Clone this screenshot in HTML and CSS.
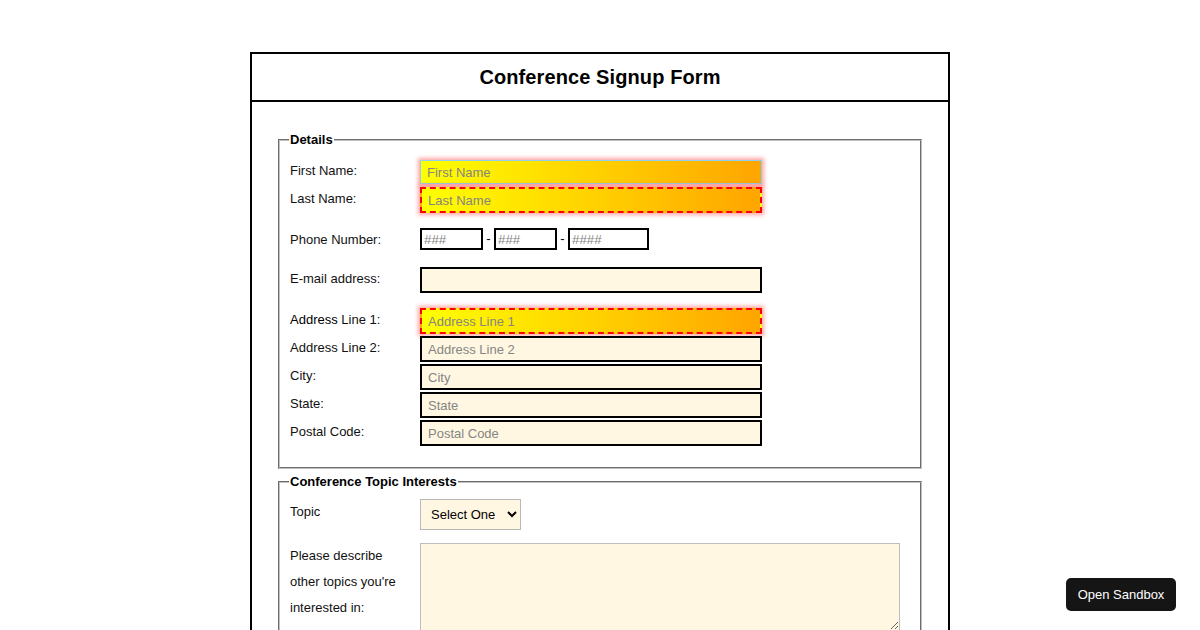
FILE: index.html
```html
<!DOCTYPE html>
<html lang="en">
<head>
<meta charset="utf-8">
<title>Conference Signup Form</title>
<link rel="stylesheet" href="styles.css">
</head>
<body>
<div class="page">
  <header class="page-head">
    <h1 class="title">Conference Signup Form</h1>
  </header>
  <form class="form">
    <fieldset class="group group-details">
      <legend class="legend">Details</legend>
      <div class="row">
        <label class="label">First Name:</label>
        <input class="field field-hot field-focus" placeholder="First Name">
      </div>
      <div class="row">
        <label class="label">Last Name:</label>
        <input class="field field-hot field-dashed" placeholder="Last Name">
      </div>
      <div class="row row-gap">
        <label class="label">Phone Number:</label>
        <div class="phone">
          <input class="phone-field" placeholder="###">
          <span class="dash">-</span>
          <input class="phone-field" placeholder="###">
          <span class="dash">-</span>
          <input class="phone-field phone-long" placeholder="####">
        </div>
      </div>
      <div class="row row-gap">
        <label class="label">E-mail address:</label>
        <input class="field">
      </div>
      <div class="row row-gap">
        <label class="label"><span class="strong-word">Address</span> Line 1:</label>
        <input class="field field-hot field-dashed" placeholder="Address Line 1">
      </div>
      <div class="row">
        <label class="label">Address Line 2:</label>
        <input class="field" placeholder="Address Line 2">
      </div>
      <div class="row">
        <label class="label">City:</label>
        <input class="field" placeholder="City">
      </div>
      <div class="row">
        <label class="label">State:</label>
        <input class="field" placeholder="State">
      </div>
      <div class="row">
        <label class="label">Postal Code:</label>
        <input class="field" placeholder="Postal Code">
      </div>
    </fieldset>
    <fieldset class="group group-topics">
      <legend class="legend">Conference Topic Interests</legend>
      <div class="row row-topic">
        <label class="label label-tall">Topic</label>
        <select class="select">
          <option>Select One</option>
        </select>
      </div>
      <div class="row">
        <label class="label label-tall">Please describe other topics you're interested in:</label>
        <textarea class="textarea"></textarea>
      </div>
    </fieldset>
  </form>
</div>
<button class="sandbox-btn" type="button">Open Sandbox</button>
</body>
</html>
```

FILE: styles.css
```css
* {
  box-sizing: border-box;
}

body {
  margin: 0;
  background: #fff;
  color: #000;
  font-family: "Liberation Sans", Arial, sans-serif;
  font-size: 13px;
}

.page {
  width: 700px;
  margin: 52px auto 0;
  border: 2px solid #000;
  border-bottom: none;
}

.page-head {
  border-bottom: 2px solid #000;
}

.title {
  margin: 0;
  padding: 12px 0 11px;
  font-size: 20px;
  line-height: 23px;
  font-weight: bold;
  letter-spacing: 0.1px;
  text-align: center;
}

.form {
  padding: 30px 24px 0;
}

.group {
  margin: 0 2px;
  border: 2px groove rgb(192, 192, 192);
  padding: 12px 10px 19px;
  min-width: 0;
}

.group-topics {
  margin-top: 5px;
  padding-top: 10px;
}

.legend {
  padding: 0 1px;
  margin-left: -1px;
  font-size: 13px;
  line-height: 15px;
  font-weight: bold;
}

.row {
  display: flex;
  align-items: flex-start;
  margin-bottom: 2px;
}

.row-gap {
  margin-top: 15px;
}

.row-topic {
  margin-bottom: 13px;
}

.label {
  flex: none;
  width: 130px;
  padding-top: 4px;
  padding-right: 10px;
  line-height: 15px;
  color: #111;
}

.strong-word {
  color: #000;
}

.label-tall {
  padding-top: 0;
  line-height: 26px;
}

.field {
  width: 342px;
  height: 26px;
  margin: 0;
  padding: 0 6px;
  border: 2px solid #000;
  background: #fff7e1;
  font-family: "Liberation Sans", Arial, sans-serif;
  font-size: 13px;
  color: #000;
  outline: none;
}

.field::placeholder,
.phone-field::placeholder {
  color: #858585;
}

.field-hot {
  background: linear-gradient(to right, #ffff00, #ffa500);
  box-shadow: 0 0 4px 2px rgba(255, 60, 60, 0.45);
}

.field-focus {
  height: 24px;
  margin: 1px 0;
  border: 1px solid #8fd0ee;
}

.field-dashed {
  border: 2px dashed #f00;
}

.phone {
  display: flex;
  align-items: flex-start;
  height: 24px;
}

.phone-field {
  width: 63px;
  height: 22px;
  margin: 0;
  padding: 1px 2px;
  border: 2px solid #000;
  background: #fff;
  font-family: "Liberation Sans", Arial, sans-serif;
  font-size: 13.33px;
  outline: none;
}

.phone-long {
  width: 81px;
}

.dash {
  width: 11px;
  line-height: 22px;
  text-align: center;
  font-size: 13px;
}

.select {
  width: 101px;
  height: 31px;
  margin: 0;
  padding: 0 2px 0 6px;
  border: 1px solid #b9b9b9;
  border-radius: 0;
  background-color: #fff7e1;
  font-family: "Liberation Sans", Arial, sans-serif;
  font-size: 13px;
  color: #000;
}

.textarea {
  display: block;
  width: 480px;
  height: 88px;
  margin: 0;
  border: 1px solid #bdbdbd;
  background: #fff7e1;
  font-family: "Liberation Sans", Arial, sans-serif;
  font-size: 13px;
}

.sandbox-btn {
  position: fixed;
  right: 24px;
  bottom: 19px;
  width: 110px;
  height: 33px;
  padding: 0;
  border: none;
  border-radius: 5px;
  background: #151515;
  color: #fff;
  font-family: "Liberation Sans", Arial, sans-serif;
  font-size: 13px;
}
```
